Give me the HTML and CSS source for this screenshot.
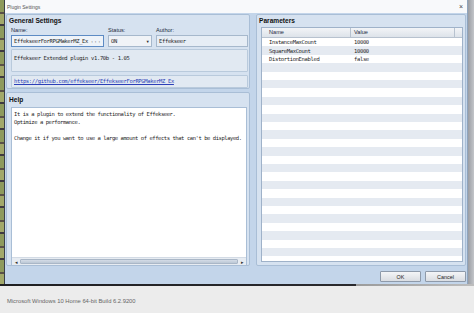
FILE: index.html
```html
<!DOCTYPE html>
<html lang="en">
<head>
    <meta charset="UTF-8">
    <title>Plugin Settings</title>
    <link rel="stylesheet" href="styles.css">
</head>
<body>

    <div class="screen">
        <div class="wallpaper"></div>

        <div class="dialog">
            <div class="titlebar">
                <span class="title">Plugin Settings</span>
                <span class="close">×</span>
            </div>

            <div class="dialog-body">
                <div class="left-col">
                    <section class="panel general">
                        <h2>General Settings</h2>
                        <div class="field-labels">
                            <span class="lbl-name">Name:</span>
                            <span class="lbl-status">Status:</span>
                            <span class="lbl-author">Author:</span>
                        </div>
                        <div class="fields">
                            <div class="input name-input">
                                <span>EffekseerForRPGMakerMZ_Ex</span>
                                <span class="dots">···</span>
                            </div>
                            <div class="input status-select">
                                <span>ON</span>
                                <span class="arrow">▼</span>
                            </div>
                            <div class="input author-input">Effekseer</div>
                        </div>
                        <div class="box desc">Effekseer Extended plugin v1.70b - 1.05</div>
                        <div class="box url"><a href="#">https://github.com/effekseer/EffekseerForRPGMakerMZ_Ex</a></div>
                    </section>

                    <section class="panel help">
                        <h2>Help</h2>
                        <div class="help-area">
                            <div class="help-text">
                                <p>It is a plugin to extend the functionality of Effekseer.</p>
                                <p>Optimize a performance.</p>
                                <p>&nbsp;</p>
                                <p>Change it if you want to use a large amount of effects that can't be displayed.</p>
                            </div>
                            <div class="hscroll">
                                <span class="sbtn">◂</span>
                                <span class="thumb"></span>
                                <span class="sbtn">▸</span>
                            </div>
                        </div>
                    </section>
                </div>

                <section class="panel params">
                    <h2>Parameters</h2>
                    <div class="table">
                        <div class="thead">
                            <span class="col-name">Name</span>
                            <span class="col-value">Value</span>
                            <span class="col-extra"></span>
                        </div>
                        <div class="tbody">
                            <div class="row"><span class="col-name">InstanceMaxCount</span><span class="col-value">10000</span></div>
                            <div class="row"><span class="col-name">SquareMaxCount</span><span class="col-value">10000</span></div>
                            <div class="row"><span class="col-name">DistortionEnabled</span><span class="col-value">false</span></div>
                        </div>
                    </div>
                </section>
            </div>

            <div class="buttons">
                <button>OK</button>
                <button>Cancel</button>
            </div>
        </div>

        <div class="edge"></div>
    </div>

    <div class="shadow"></div>

    <footer>Microsoft Windows 10 Home 64-bit Build 6.2.9200</footer>

</body>
</html>
```

FILE: styles.css
```css
body {
    margin: 0;
    width: 474px;
    height: 313px;
    overflow: hidden;
    background-color: #ececec;
    font-family: 'Liberation Sans', 'Noto Sans', sans-serif;
    color: #1d2a3c;
}

.screen {
    display: flex;
    height: 284px;
}

.wallpaper {
    width: 4px;
    background: repeating-linear-gradient(#8e9a5c 0 12px, #5a5148 12px 14px, #a2a86a 14px 24px, #3f3a40 24px 26px);
    border-right: 1px solid #3b3f48;
}

.edge {
    flex: 1;
    background: linear-gradient(to right, #9a9da3, #c3c5c9);
}

/* dialog window */
.dialog {
    width: 463px;
    display: flex;
    flex-direction: column;
    background-color: #c3d5ea;
    border-right: 1px solid #8fa4bd;
    box-sizing: border-box;
}

.titlebar {
    height: 13px;
    display: flex;
    align-items: center;
    justify-content: space-between;
    background-color: #f8f9fb;
    padding: 0 4px 0 2px;
}

.title {
    font-size: 5px;
    color: #555;
}

.close {
    font-size: 7px;
    color: #444;
}

.dialog-body {
    display: flex;
    gap: 6px;
    padding: 1px 1px 0 1px;
}

.left-col {
    width: 244px;
    display: flex;
    flex-direction: column;
    gap: 3px;
}

.panel {
    background-color: #d6e2f0;
    border: 1px solid #a9bed6;
    border-radius: 2px;
    box-sizing: border-box;
}

.panel h2 {
    margin: 0 0 0 -2px;
    font-size: 6.6px;
    font-weight: bold;
    color: #111;
    line-height: 12px;
}

.general {
    height: 75px;
    padding: 0 1px 0 4px;
}

.field-labels {
    display: flex;
    font-size: 5.6px;
    line-height: 7px;
    color: #1d2a3c;
}

.lbl-name { width: 97px; }
.lbl-status { width: 48px; }

.input,
.box,
.help-text,
.table {
    font-family: 'DejaVu Sans Mono', 'Liberation Mono', monospace;
    font-size: 5.5px;
    letter-spacing: -0.35px;
    color: #1f1f1f;
}

.fields {
    display: flex;
    gap: 4px;
    margin-top: 1px;
}

.input {
    height: 12px;
    box-sizing: border-box;
    border: 1px solid #a6b8cc;
    background-color: #e6edf5;
    display: flex;
    align-items: center;
    justify-content: space-between;
    padding: 0 2px;
}

.name-input {
    width: 93px;
    border-color: #5d8bc4;
    background-color: #eef3f9;
}

.dots {
    color: #555;
    font-size: 6px;
    letter-spacing: 0;
}

.status-select {
    width: 44px;
    background-color: #f0f3f7;
}

.arrow {
    font-size: 4px;
    color: #333;
    letter-spacing: 0;
}

.author-input {
    width: 92px;
}

.box {
    width: 237px;
    box-sizing: border-box;
    border: 1px solid #b9cadc;
    background-color: #e1e9f2;
    border-radius: 1px;
    padding-left: 2px;
}

.desc {
    height: 23px;
    margin-top: 2px;
    padding-top: 5px;
    line-height: 6px;
}

.url {
    height: 13px;
    margin-top: 3px;
    line-height: 11px;
}

.url a {
    color: #2c3fb8;
}

/* help */
.help {
    height: 174px;
    padding: 0 2px 0 4px;
}

.help h2 {
    line-height: 14px;
}

.help-area {
    height: 157px;
    border: 1px solid #a9bed6;
    background-color: #fff;
    display: flex;
    flex-direction: column;
}

.help-text {
    flex: 1;
    padding: 2px 1px 0 2px;
    line-height: 8px;
    letter-spacing: -0.43px;
    white-space: nowrap;
}

.help-text p {
    margin: 0;
}

.hscroll {
    height: 7px;
    display: flex;
    align-items: center;
    gap: 1px;
    background-color: #e7ecf2;
    border-top: 1px solid #d3dbe5;
    padding: 0 1px;
}

.sbtn {
    width: 6px;
    font-size: 5px;
    line-height: 6px;
    text-align: center;
    color: #333;
}

.thumb {
    flex: 1;
    height: 5px;
    background: linear-gradient(#d4dce6, #bcc8d6);
    border: 1px solid #aab7c7;
    box-sizing: border-box;
    border-radius: 1px;
}

/* parameters */
.params {
    width: 210px;
    height: 252px;
    padding: 0 2px 3px 4px;
    display: flex;
    flex-direction: column;
}

.table {
    flex: 1;
    border: 1px solid #9fb2c9;
    background-color: #fff;
    display: flex;
    flex-direction: column;
}

.thead {
    height: 9px;
    display: flex;
    align-items: center;
    background: linear-gradient(#f2f4f7, #dde3ea);
    border-bottom: 1px solid #b7c2cf;
    font-family: 'Liberation Sans', 'Noto Sans', sans-serif;
    letter-spacing: 0;
    font-size: 5.6px;
    color: #1d2a3c;
}

.thead span {
    height: 100%;
    line-height: 9px;
    box-sizing: border-box;
}

.thead .col-name {
    border-right: 1px solid #b7c2cf;
}

.thead .col-extra {
    width: 8px;
    border-left: 1px solid #b7c2cf;
    margin-left: auto;
}

.col-name {
    width: 89px;
    padding-left: 7px;
    box-sizing: border-box;
}

.col-value {
    padding-left: 3px;
}

.tbody {
    flex: 1;
    background: repeating-linear-gradient(#fff 0 8.4px, #e5eaf1 8.4px 16.8px);
}

.row {
    height: 8.4px;
    display: flex;
    align-items: center;
}

/* buttons */
.buttons {
    flex: 1;
    display: flex;
    justify-content: flex-end;
    align-items: center;
    gap: 4px;
    padding: 3px 1px 0 0;
}

button {
    width: 41px;
    height: 11px;
    padding: 0;
    font-family: 'Liberation Sans', 'Noto Sans', sans-serif;
    font-size: 5.4px;
    color: #222;
    border: 1px solid #8e9aaa;
    border-radius: 1px;
    background: linear-gradient(#f4f5f7, #dadde2);
}

.shadow {
    height: 2px;
    background: linear-gradient(to right, #1f1f22 0, #2a2a2e 75%, #9b9b9b 75%, #bdbdbd 100%);
}

footer {
    padding: 12px 0 0 7px;
    font-size: 5.8px;
    color: #666;
}
```
